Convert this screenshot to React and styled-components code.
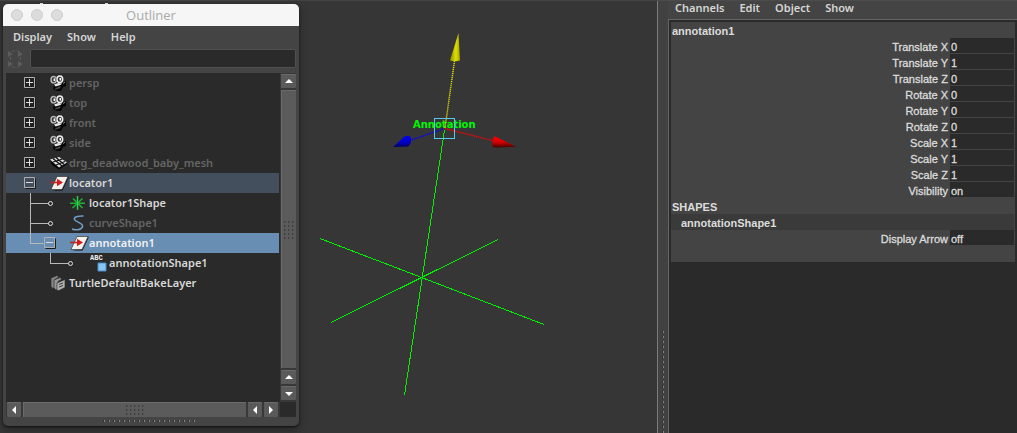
import React from "react";
import styled, { createGlobalStyle, css } from "styled-components";

const Global = createGlobalStyle`
  * { box-sizing: border-box; }
  body { margin: 0; background: #363636; }
  button, input { font: inherit; color: inherit; margin: 0; padding: 0; border: 0; border-radius: 0; }
  svg { display: block; }
`;

const uiFont = css`font-family: "Noto Sans", "Open Sans", sans-serif; font-weight: 600;`;

const Page = styled.div`
  display: flex;
  min-height: 100vh;
  background: #363636;
`;
/* The two light specks are the tops of letters hidden by the window. */
const Viewport = styled.main`
  flex: 1;
  min-width: 0;
  display: flex;
  border-top: 1px solid #444;
  background:
    linear-gradient(#eee, #eee) 40px 2px / 3px 1px no-repeat,
    linear-gradient(#eee, #eee) 105px 2px / 3px 1px no-repeat;
`;
const Scene = styled.div`
  flex: 1;
  min-width: 0;
  svg { width: 100%; height: 100%; }
`;

/* Outliner window */
const Window = styled.section`
  flex: 0 0 296px;
  margin: 3px 0 7px 3px;
  display: flex;
  flex-direction: column;
  background: #444;
  border-radius: 5px;
  box-shadow: 0 3px 8px rgba(0, 0, 0, 0.35), 0 1px 2px rgba(0, 0, 0, 0.6);
  ${uiFont}
`;
const TitleBar = styled.header`
  height: 22px;
  display: grid;
  grid-template-columns: 1fr auto 1fr;
  align-items: center;
  padding: 0 8px;
  background: #f6f6f6;
  border-radius: 5px 5px 0 0;
`;
const Lights = styled.div`
  display: flex;
  gap: 8px;
`;
const Light = styled.button`
  width: 12px;
  height: 12px;
  background: #dcdcdc;
  border: 1px solid #cecece;
  border-radius: 50%;
`;
const Title = styled.h1`
  margin: 0;
  font: 400 13px/22px "Open Sans", sans-serif;
  color: #aaa;
`;
const MenuBar = styled.nav`
  display: flex;
  align-items: flex-start;
  gap: 15px;
  height: ${(p) => (p.$window ? 23 : 18)}px;
  padding: ${(p) => (p.$window ? "4px 0 0 10px" : "0 0 0 7px")};
  ${uiFont}
`;
const MenuButton = styled.button`
  background: none;
  color: #d6d6d6;
  font-size: 11px;
  line-height: 14px;
`;
const SearchRow = styled.div`
  display: flex;
  align-items: center;
  gap: 5px;
  padding: 0 3px 5px 4px;
`;
const SearchInput = styled.input`
  flex: 1;
  min-width: 0;
  height: 19px;
  background: #2a2a2a;
  border: 1px solid #505050;
  border-radius: 2px;
  font-size: 11px;
  color: #ccc;
`;
const Body = styled.div`
  flex: 1;
  display: grid;
  grid-template-columns: 1fr 16px;
  grid-template-rows: 1fr 15px;
  margin: 0 3px;
  background: #2a2a2a;
`;
const Tree = styled.ul`
  list-style: none;
  margin: 0;
  padding: 0 1px 4px 0;
`;
const Row = styled.li`
  display: flex;
  align-items: center;
  height: 20px;
  font-size: 11px;
  line-height: 20px;
  white-space: nowrap;
  color: ${(p) => (p.$dim ? "#656565" : p.$state === "selected" ? "#f2f2f2" : "#d8d8d8")};
  background: ${(p) => ({ parent: "#434f5c", selected: "#688eb4" })[p.$state] || "transparent"};
`;
const Toggle = styled.button`
  width: 12px;
  height: 12px;
  margin-right: 14px;
  background: transparent;
`;
const IconBox = styled.span`
  width: 19px;
`;
const Bar = styled.div`
  display: flex;
  flex-direction: ${(p) => (p.$vertical ? "column" : "row")};
  gap: 2px;
  padding: ${(p) => (p.$vertical ? "1px 0 2px 1px" : "0 2px 0 1px")};
  background: #383838;
`;
const BarButton = styled.button`
  flex: 0 0 14px;
  display: grid;
  place-items: center;
  background: #5a5a5a;
  border-top: 1px solid #6a6a6a;
  border-radius: 1px;
`;
const Thumb = styled.div`
  flex: 1;
  display: grid;
  place-items: center;
  background: #5b5b5b;
  border: solid #6a6a6a;
  border-width: 1px 0 0 1px;
`;
const WindowGrip = styled.div`
  height: 9px;
  display: flex;
  justify-content: center;
  padding: 3px 4px 0 0;
`;

/* Channel box */
const Channels = styled.aside`
  flex: 0 0 360px;
  display: flex;
  background: #444;
  border-top: 1px solid #4c4c4c;
`;
const Splitter = styled.div`
  flex: 0 0 11px;
  display: flex;
  flex-direction: column;
  justify-content: flex-end;
  align-items: center;
  border-left: 1px solid #7c7c7c;
  background: #414141;
`;
const ChannelMain = styled.div`
  flex: 1;
  min-width: 0;
  display: flex;
  flex-direction: column;
`;
const Panel = styled.div`
  flex: 1;
  display: flex;
  flex-direction: column;
  padding: 2px 2px 0 2px;
  background: #2a2a2a;
  border: solid #656565;
  border-width: 1px 0 0 1px;
  font-family: "Liberation Sans", Arial, sans-serif;
  font-size: 11px;
  color: #dcdcdc;
`;
const Attributes = styled.div`
  background: #444;
  padding: 0 1px 16px 0;
`;
const NodeName = styled.h2`
  margin: 0;
  height: 16px;
  padding-left: ${(p) => (p.$nested ? 10 : 1)}px;
  font-size: 11px;
  line-height: 18px;
  background: ${(p) => (p.$nested ? "#3a3a3a" : "transparent")};
`;
const Attr = styled.label`
  display: flex;
  justify-content: flex-end;
  gap: 2px;
  height: 16px;
  line-height: 18px;
  -webkit-text-stroke: 0.3px currentColor;
`;
const Value = styled.input`
  width: 64px;
  height: 15px;
  padding: 2px 0 0 1px;
  background: #2a2a2a;
  -webkit-text-stroke: 0.3px currentColor;
`;

const arrows = {
  up: "M0 5h8L4 1z",
  down: "M0 2h8L4 6z",
  left: "M6 0v8L2 4z",
  right: "M2 0v8L6 4z",
};
const ArrowButton = ({ dir, label }) => (
  <BarButton aria-label={label}>
    <svg width="8" height="8"><path d={arrows[dir]} fill="#fff" /></svg>
  </BarButton>
);

const Dots = ({ cols, rows, pitch, light }) => (
  <svg width={(cols - 1) * pitch + 2} height={(rows - 1) * pitch + 2} shapeRendering="crispEdges">
    {Array.from({ length: cols * rows }, (_, i) => {
      const x = (i % cols) * pitch;
      const y = Math.floor(i / cols) * pitch;
      return (
        <g key={i}>
          <rect x={x} y={y} width="2" height="2" fill={light ? "#303030" : "#404040"} />
          <rect x={x + 1} y={y} width="1" height="2" fill={light ? "#858585" : "#505050"} />
        </g>
      );
    })}
  </svg>
);

const CameraIcon = () => (
  <svg width="17" height="16" viewBox="0 0 17 16">
    <path d="M0 5l4 5-1 4 4 2h4l2-4 3-1V6l-3 1-1-5z" fill="#060606" />
    <ellipse cx="9.800" cy="4.200" rx="2.900" ry="3.300" fill="#333" stroke="#ececec" strokeWidth="1.500" />
    <ellipse cx="3.700" cy="4.800" rx="2.700" ry="3.200" fill="#333" stroke="#b4b4b4" strokeWidth="1.500" />
    <path d="M4.300 3.500v2.500M10.300 3v2.500" stroke="#fff" strokeWidth="1.500" />
    <path d="M4 9.500l4-1.500 4 .5-1.500 1.500-5 1.500z" fill="#e4e4e4" />
    <path d="M5 13.500l4-2 2 .3-1.500 1.700-4 1z" fill="#4a4a4a" />
    <path d="M13 8.500l2-1.500" stroke="#8a8a8a" />
  </svg>
);
const MeshIcon = () => (
  <svg width="18" height="16" viewBox="0 0 18 16">
    <path d="M0 5l2 5 7 4.500 8-5.500V7l-8 4z" fill="#050505" />
    <path d="M0 4.500L9 2l8 5.500-8 5z" fill="#dedede" />
    <path d="M3 3.500l9 7.500M6 2.500l8 7M3 7l9.500-3M6 10l9-3.500" stroke="#111" strokeWidth="1.300" />
  </svg>
);
const TransformIcon = () => (
  <svg width="19" height="16" viewBox="0 0 19 16">
    <path d="M2 15.500h10.500L18.500 3V1.500l-6 12.500z" fill="#0a0a0a" />
    <path d="M7 1.500h11L12 14.500H1z" fill="#f5f2ee" stroke="#222" strokeWidth=".6" />
    <path d="M0 7.500h8" stroke="#b02828" strokeWidth="1.600" />
    <path d="M7 3.800l6 3.700-6 3.700z" fill="#d41c1c" />
  </svg>
);
const LocatorIcon = () => (
  <svg width="17" height="16" viewBox="0 0 17 16">
    <path d="M7.500 1v14M0 8.200h15M3 3.500l9.500 9.500M12.500 3.500l-10 9.500" stroke="#1fae38" strokeWidth="1.600" />
    <path d="M7.500 1v13" stroke="#38d552" strokeWidth=".8" />
  </svg>
);
const CurveIcon = () => (
  <svg width="17" height="16" viewBox="0 0 17 16">
    <path d="M13.500 1C8 .8 3.500 2 4.500 4.500S13.500 8 12.500 11.500 6 15.500 2 14" fill="none" stroke="#6f9cc4" strokeWidth="1.600" />
  </svg>
);
const AbcText = styled.text`
  font: 700 7px "Liberation Mono", monospace;
`;
const AnnotationIcon = () => (
  <svg width="18" height="20" viewBox="0 0 18 20">
    <AbcText x="0" y="7" fill="#f0f0f0">ABC</AbcText>
    <path d="M8 10h8v8H8z" fill="#86c4f4" stroke="#4a8cc4" />
  </svg>
);
const LayerIcon = () => (
  <svg width="17" height="16" viewBox="0 0 17 16">
    <path d="M1 3l6-2.500 2 1.500-4 2.500v8l-2 1-2-2z" fill="#858585" stroke="#252525" strokeWidth=".6" />
    <path d="M4 5l6-2.500 2 1.500-4 2.500v8l-2 .5-2-2z" fill="#959595" stroke="#252525" strokeWidth=".6" />
    <path d="M7 8l8-3.500v8L9 15.500H7z" fill="#b0b0b0" stroke="#252525" strokeWidth=".6" />
    <path d="M9 9.500l4-1.500M9 12l4-1.500" stroke="#3a3a3a" />
  </svg>
);

const icons = {
  camera: CameraIcon,
  mesh: MeshIcon,
  transform: TransformIcon,
  locator: LocatorIcon,
  curve: CurveIcon,
  annotation: AnnotationIcon,
  layer: LayerIcon,
};

const nodes = [
  { name: "persp", icon: "camera", depth: 0, toggle: "plus", dim: true },
  { name: "top", icon: "camera", depth: 0, toggle: "plus", dim: true },
  { name: "front", icon: "camera", depth: 0, toggle: "plus", dim: true },
  { name: "side", icon: "camera", depth: 0, toggle: "plus", dim: true },
  { name: "drg_deadwood_baby_mesh", icon: "mesh", depth: 0, toggle: "plus", dim: true },
  { name: "locator1", icon: "transform", depth: 0, toggle: "minus", state: "parent" },
  { name: "locator1Shape", icon: "locator", depth: 1 },
  { name: "curveShape1", icon: "curve", depth: 1, dim: true },
  { name: "annotation1", icon: "transform", depth: 1, toggle: "minus", state: "selected", last: true },
  { name: "annotationShape1", icon: "annotation", depth: 2, last: true },
  { name: "TurtleDefaultBakeLayer", icon: "layer", depth: 0 },
];

const Branch = ({ depth, toggle, last }) => {
  const width = (toggle ? 18 : 44) + depth * 20;
  const x = 4 + depth * 20 + 0.5;
  return (
    <svg width={width} height="20" fill="none" stroke="#b9b9b9">
      {depth > 0 && (
        <>
          <path d={`M${x} 0V${last ? 11 : 20}M${x} 10.500H${toggle ? x + 13 : x + 18}`} />
          {!toggle && <circle cx={x + 20} cy="10.500" r="2" stroke="#e0e0e0" />}
        </>
      )}
    </svg>
  );
};

const ToggleBox = ({ kind, name }) => (
  <Toggle aria-label={`${kind === "plus" ? "Expand" : "Collapse"} ${name}`}>
    <svg width="12" height="12">
      <path d="M1.500 11.500H11.500V1.500" fill="none" stroke="#1c1c1c" />
      <path d="M.5 .5H10.500V10.500H.5z" fill={kind === "plus" ? "#202020" : "none"} stroke="#b0b0b0" />
      <path d={kind === "plus" ? "M2 5.500h7M5.500 2v7" : "M2 5.500h7"} stroke="#dedede" />
    </svg>
  </Toggle>
);

const channels = [
  ["Translate X", "0"],
  ["Translate Y", "1"],
  ["Translate Z", "0"],
  ["Rotate X", "0"],
  ["Rotate Y", "0"],
  ["Rotate Z", "0"],
  ["Scale X", "1"],
  ["Scale Y", "1"],
  ["Scale Z", "1"],
  ["Visibility", "on"],
];

const Field = ({ label, value }) => (
  <Attr>
    {label}
    <Value defaultValue={value} />
  </Attr>
);

const SceneLabel = styled.text`
  font: 700 10px "DejaVu Sans", sans-serif;
`;

const SceneDrawing = () => (
  <svg viewBox="299 1 358 432" preserveAspectRatio="xMinYMin meet" role="img" aria-label="Locator with annotation">
    <defs>
      <linearGradient id="yellow"><stop offset="0" stopColor="#8f8f00" /><stop offset=".6" stopColor="#e0e000" /><stop offset="1" stopColor="#a0a000" /></linearGradient>
      <linearGradient id="red" x2="0" y2="1"><stop offset="0" stopColor="#f00000" /><stop offset=".5" stopColor="#dc0000" /><stop offset="1" stopColor="#400" /></linearGradient>
      <linearGradient id="blue" x2="0" y2="1"><stop offset="0" stopColor="#0000f8" /><stop offset=".6" stopColor="#0000c0" /><stop offset="1" stopColor="#000060" /></linearGradient>
    </defs>
    <g shapeRendering="crispEdges" stroke="#00f000" fill="none">
      <path d="M444.500 130L404.500 395M320 238.500L544 324.500M331 322.500L498 239.500" />
    </g>
    <SceneLabel x="413" y="128" fill="#00f800">Annotation</SceneLabel>
    <g fill="none" strokeWidth="1.400" strokeDasharray="1.200 .8">
      <path d="M454.500 61L445 128" stroke="#e0e000" />
      <path d="M445 128.500L494 141" stroke="#ff0000" />
      <path d="M443 129L410 140.500" stroke="#0000ff" />
    </g>
    <path d="M458.500 33L450 60.500Q455 62 460 60.500z" fill="url(#yellow)" />
    <path d="M516 146.800L495 136.300Q492 137 492.500 147L496 147.500z" fill="url(#red)" />
    <path d="M393 147L404 137Q409 134 411 138 412 143 408 146.500z" fill="url(#blue)" />
    <rect x="434.500" y="118.500" width="20" height="20" fill="none" stroke="#56c8f0" />
  </svg>
);

export default function App() {
  return (
    <Page>
      <Global />
      <Viewport>
        <Window aria-label="Outliner">
          <TitleBar>
            <Lights>
              <Light aria-label="Close" />
              <Light aria-label="Minimize" />
              <Light aria-label="Zoom" />
            </Lights>
            <Title>Outliner</Title>
          </TitleBar>
          <MenuBar $window>
            {["Display", "Show", "Help"].map((m) => <MenuButton key={m}>{m}</MenuButton>)}
          </MenuBar>
          <SearchRow>
            <svg width="18" height="19" fill="#5c5c5c">
              <path d="M1 2l5 3-5 3zM11 2l5 3-5 3zM1 12l5 3-5 3zM11 12l5 3-5 3z" />
              <path d="M5 2.500Q8.500 .5 12 2.500M5 17.500Q8.500 19.500 12 17.500M3.500 8v5M13.500 8v5" fill="none" stroke="#5c5c5c" strokeDasharray="3 2" />
            </svg>
            <SearchInput aria-label="Search" />
          </SearchRow>
          <Body>
            <Tree>
              {nodes.map((n) => {
                const Icon = icons[n.icon];
                return (
                  <Row key={n.name} $dim={n.dim} $state={n.state}>
                    <Branch {...n} />
                    {n.toggle && <ToggleBox kind={n.toggle} name={n.name} />}
                    <IconBox><Icon /></IconBox>
                    {n.name}
                  </Row>
                );
              })}
            </Tree>
            <Bar $vertical>
              <ArrowButton dir="up" label="Scroll up" />
              <Thumb><Dots cols={3} rows={5} pitch={4} /></Thumb>
              <ArrowButton dir="up" label="Scroll up" />
              <ArrowButton dir="down" label="Scroll down" />
            </Bar>
            <Bar>
              <ArrowButton dir="left" label="Scroll left" />
              <Thumb><Dots cols={5} rows={3} pitch={4} /></Thumb>
              <ArrowButton dir="left" label="Scroll left" />
              <ArrowButton dir="right" label="Scroll right" />
            </Bar>
          </Body>
          <WindowGrip><Dots cols={19} rows={1} pitch={5} light /></WindowGrip>
        </Window>
        <Scene><SceneDrawing /></Scene>
      </Viewport>
      <Channels>
        <Splitter><Dots cols={1} rows={21} pitch={5} light /></Splitter>
        <ChannelMain>
          <MenuBar>
            {["Channels", "Edit", "Object", "Show"].map((m) => <MenuButton key={m}>{m}</MenuButton>)}
          </MenuBar>
          <Panel>
            <Attributes>
              <NodeName>annotation1</NodeName>
              {channels.map(([label, value]) => <Field key={label} label={label} value={value} />)}
              <NodeName>SHAPES</NodeName>
              <NodeName $nested>annotationShape1</NodeName>
              <Field label="Display Arrow" value="off" />
            </Attributes>
          </Panel>
        </ChannelMain>
      </Channels>
    </Page>
  );
}
